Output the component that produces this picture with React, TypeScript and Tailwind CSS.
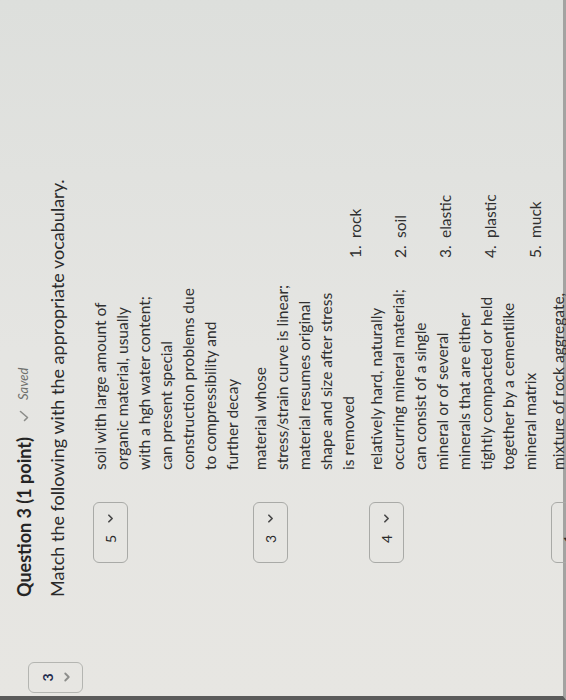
const rows = [
  {
    value: "5",
    lines: [
      "soil with large amount of",
      "organic material, usually",
      "with a hgh water content;",
      "can present special",
      "construction problems due",
      "to compressibility and",
      "further decay",
    ],
  },
  {
    value: "3",
    lines: [
      "material whose",
      "stress/strain curve is linear;",
      "material resumes original",
      "shape and size after stress",
      "is removed",
    ],
  },
  {
    value: "4",
    lines: [
      "relatively hard, naturally",
      "occurring mineral material;",
      "can consist of a single",
      "mineral or of several",
      "minerals that are either",
      "tightly compacted or held",
      "together by a cementlike",
      "mineral matrix",
    ],
  },
  {
    value: "1",
    lines: ["mixture of rock aggregate,"],
  },
];

const choices = ["rock", "soil", "elastic", "plastic", "muck"];

function ChevronDown({ className }: { className?: string }) {
  return (
    <svg className={className} viewBox="0 0 12 12" fill="none" stroke="currentColor">
      <path d="M3 4.5l3 3 3-3" strokeWidth={1.6} strokeLinecap="round" strokeLinejoin="round" />
    </svg>
  );
}

function SelectBox({ value }: { value: string }) {
  return (
    <div className="mt-[4px] flex h-[35px] w-[61px] shrink-0 items-center justify-between rounded-md border border-[#a9aaa7] pl-[19px] pr-[9px] text-[14px] text-[#2b2b2b]">
      <span>{value}</span>
      <ChevronDown className="h-[13px] w-[13px] text-[#4a4a4a]" />
    </div>
  );
}

export default function App() {
  return (
    <div className="h-[700px] w-[566px] overflow-hidden bg-[#e3e3e0]">
      <div className="flex h-[566px] w-[700px] origin-top-left translate-y-[700px] -rotate-90 border-b-[3px] border-l-[4px] border-b-[#a3a3a1] border-l-[#5b5b5a] bg-linear-to-r from-[#e7e6e2] via-[#e5e5e2] to-[#dddfdc] font-['Lato','Open_Sans',sans-serif] text-[#303030]">
        {/* question nav */}
        <div className="w-[99px] shrink-0 pl-[3px] pt-[28px]">
          <div className="flex h-[55px] w-[31px] flex-col items-center rounded-md border border-[#b4b5b1] pt-[9px]">
            <span className="text-[14px] font-bold leading-[20px] text-[#1f2c4f]">3</span>
            <ChevronDown className="mt-[2px] h-[14px] w-[14px] text-[#8d8e8b]" />
          </div>
        </div>

        <div className="flex flex-1 flex-col pt-[12px]">
          <div className="flex items-center">
            <h2 className="text-[18px] font-bold leading-[24px] text-[#252525]">Question 3 (1 point)</h2>
            <svg className="ml-[14px] h-[14px] w-[14px] text-[#8c8d8a]" viewBox="0 0 14 14" fill="none" stroke="currentColor">
              <path d="M2.5 7.5l3 3 6-7" strokeWidth={1.6} strokeLinecap="round" strokeLinejoin="round" />
            </svg>
            <span className="ml-[9px] text-[13px] italic text-[#6f706d]">Saved</span>
          </div>

          <p className="mt-[9px] text-[18px] leading-[24px] text-[#2a2a2a]">
            Match the following with the appropriate vocabulary.
          </p>

          <div className="mt-[20px] flex">
            <div className="flex w-[332px] shrink-0 flex-col gap-[6px] pl-[34px]">
              {rows.map((row) => (
                <div key={row.value + row.lines[0]} className="flex gap-[32px]">
                  <SelectBox value={row.value} />
                  <div className="text-[15.5px] leading-[22px]">
                    {row.lines.map((line) => (
                      <div key={line} className="whitespace-nowrap">
                        {line}
                      </div>
                    ))}
                  </div>
                </div>
              ))}
            </div>

            <div className="ml-[7px] flex flex-col gap-[23px] pt-[255px] text-[15.5px] leading-[22px]">
              {choices.map((c, i) => (
                <div key={c} className="flex">
                  <span className="w-[20px]">{i + 1}.</span>
                  <span>{c}</span>
                </div>
              ))}
            </div>
          </div>
        </div>
      </div>
    </div>
  );
}
